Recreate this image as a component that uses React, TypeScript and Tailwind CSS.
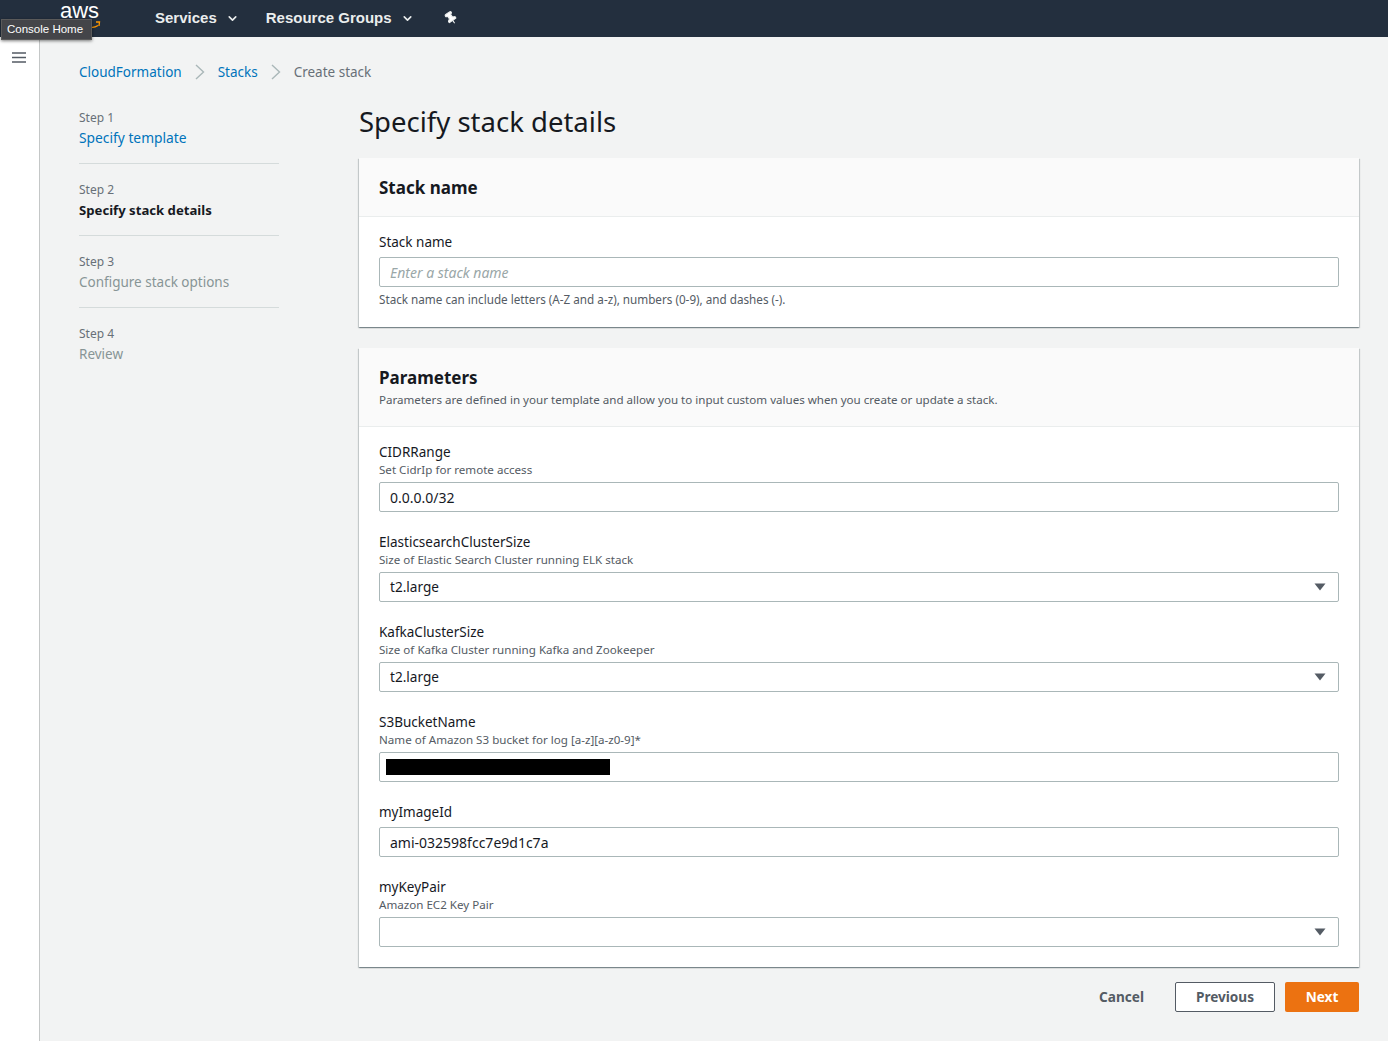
import { ChevronDown, Pin } from 'lucide-react'

const font = { fontFamily: '"Noto Sans", sans-serif' }

const steps = [
  { step: 'Step 1', title: 'Specify template', cls: 'text-[13.8px] text-[#0073bb]' },
  { step: 'Step 2', title: 'Specify stack details', cls: 'font-bold text-[13.15px] text-[#16191f]' },
  { step: 'Step 3', title: 'Configure stack options', cls: 'text-[13.5px] text-[#879596]' },
  { step: 'Step 4', title: 'Review', cls: 'text-[13.5px] text-[#879596]' },
]

function Crumb() {
  return (
    <svg width="10" height="16" viewBox="0 0 10 16" fill="none" className="mx-[13px] shrink-0">
      <path d="M1 1l7.5 7L1 15" stroke="#aab7b8" strokeWidth="1.4" />
    </svg>
  )
}

function TopBar() {
  return (
    <header className="relative flex h-[37px] items-center bg-[#232f3e] text-white">
      <div className="relative ml-[60px] h-[37px] w-[40px]">
        <span className="absolute left-0 top-0 text-[22px] leading-[22px] font-['Liberation_Sans']">aws</span>
        <svg className="absolute left-[28px] top-[19px]" width="13" height="10" viewBox="0 0 13 10" fill="none">
          <path d="M1 7.5c3 1.5 6 1 9-1M8 3h3.5L11 7" stroke="#f90" strokeWidth="1.3" />
        </svg>
      </div>
      <nav className="ml-[55px] flex items-center font-['Liberation_Sans'] text-[15px] font-bold text-[#eaeded]">
        <span className="-mt-[1px]">Services</span>
        <ChevronDown className="ml-[9px] h-[13px] w-[13px]" strokeWidth={3} />
        <span className="-mt-[1px] ml-[27px]">Resource Groups</span>
        <ChevronDown className="ml-[9px] h-[13px] w-[13px]" strokeWidth={3} />
        <Pin className="ml-[30px] -mt-[2px] h-[14px] w-[14px] rotate-[-35deg] fill-white" strokeWidth={2} />
      </nav>
      <div className="absolute left-[1px] top-[19px] flex h-[21px] w-[91px] items-center border border-[#5a5a5a] bg-[#444549] pl-[5px] font-['Liberation_Sans'] text-[11.5px] text-white shadow-[0_1px_3px_rgba(0,0,0,0.5)]">
        Console Home
      </div>
    </header>
  )
}

function Field({ label, desc, children }: { label: string; desc?: string; children: React.ReactNode }) {
  return (
    <div>
      <div className="h-5 text-[13.5px] leading-5 text-[#16191f]">{label}</div>
      {desc ? (
        <div className="mb-1 h-4 text-[11.6px] leading-4 text-[#545b64]">{desc}</div>
      ) : (
        <div className="h-[5px]" />
      )}
      {children}
    </div>
  )
}

function Input({ value, placeholder, select }: { value?: string; placeholder?: string; select?: boolean }) {
  return (
    <div className="flex h-[30px] items-center justify-between rounded-[2px] border border-[#aab7b8] bg-white pl-[10px] pr-[12px] text-[14px] text-[#16191f]">
      {placeholder ? <span className="italic text-[#9aa7a8]">{placeholder}</span> : <span className={select ? 'text-[13.6px]' : ''}>{value}</span>}
      {select && (
        <svg width="12" height="8" viewBox="0 0 12 8" className="shrink-0">
          <path d="M0.5 0.5h11L6 7.5z" fill="#545b64" />
        </svg>
      )}
    </div>
  )
}

const cardShadow = 'shadow-[0_1px_1px_0_rgba(0,28,36,0.3),1px_1px_1px_0_rgba(0,28,36,0.15),-1px_1px_1px_0_rgba(0,28,36,0.15)]'

export default function App() {
  return (
    <div className="min-h-[1041px] bg-[#f2f3f3]" style={font}>
      <TopBar />
      <div className="flex min-h-[1004px]">
        <aside className="w-[40px] shrink-0 border-r border-[#c4c7c7] bg-white pl-[12px] pt-[15px]">
          <svg width="14" height="11" viewBox="0 0 14 11" className="block">
            <path d="M0 1h14M0 5.5h14M0 10h14" stroke="#545b64" strokeWidth="1.5" />
          </svg>
        </aside>
        <main className="min-w-0 flex-1 pl-[39px] pr-[29px]">
          <div className="mt-[22px] flex h-[26px] items-center text-[13.5px]">
            <span className="text-[#0073bb]">CloudFormation</span>
            <Crumb />
            <span className="text-[#0073bb]">Stacks</span>
            <Crumb />
            <span className="text-[#687078]">Create stack</span>
          </div>
          <div className="flex">
            <ol className="w-[200px] shrink-0 pt-[23px]">
              {steps.map((s, i) => (
                <li key={s.step} className={i < 3 ? 'mb-[16px] h-[56px] border-b border-[#d5dbdb]' : ''}>
                  <div className="h-[20px] text-[12px] leading-5 text-[#687078]">{s.step}</div>
                  <div className={`h-[20px] leading-5 ${s.cls}`}>{s.title}</div>
                </li>
              ))}
            </ol>
            <div className="ml-[80px] min-w-0 flex-1">
              <h1 className="flex h-[73px] items-center pt-[1px] text-[27.5px] text-[#16191f]">Specify stack details</h1>
              <section className={`bg-white ${cardShadow}`}>
                <div className="flex h-[59px] items-center border-b border-[#eaeded] bg-[#fafafa] px-5 pt-[1px]">
                  <h2 className="text-[17px] font-bold text-[#16191f]">Stack name</h2>
                </div>
                <div className="px-5 pb-[19px] pt-[15px]">
                  <Field label="Stack name">
                    <Input placeholder="Enter a stack name" />
                  </Field>
                  <p className="mt-[4px] h-4 text-[11.7px] leading-4 text-[#545b64]">
                    Stack name can include letters (A-Z and a-z), numbers (0-9), and dashes (-).
                  </p>
                  <div className="h-[1px]" />
                </div>
              </section>
              <section className={`mt-[21px] bg-white ${cardShadow}`}>
                <div className="h-[79px] border-b border-[#eaeded] bg-[#fafafa] px-5 pt-[17px]">
                  <h2 className="h-[27px] text-[17px] font-bold leading-[26px] text-[#16191f]">Parameters</h2>
                  <p className="text-[11.58px] leading-4 text-[#545b64]">
                    Parameters are defined in your template and allow you to input custom values when you create or update a stack.
                  </p>
                </div>
                <div className="flex flex-col gap-5 px-5 pb-5 pt-[15px]">
                  <Field label="CIDRRange" desc="Set CidrIp for remote access">
                    <Input value="0.0.0.0/32" />
                  </Field>
                  <Field label="ElasticsearchClusterSize" desc="Size of Elastic Search Cluster running ELK stack">
                    <Input value="t2.large" select />
                  </Field>
                  <Field label="KafkaClusterSize" desc="Size of Kafka Cluster running Kafka and Zookeeper">
                    <Input value="t2.large" select />
                  </Field>
                  <Field label="S3BucketName" desc="Name of Amazon S3 bucket for log [a-z][a-z0-9]*">
                    <div className="flex h-[30px] items-center rounded-[2px] border border-[#aab7b8] bg-white pl-[6px]">
                      <div className="h-4 w-[224px] bg-black" />
                    </div>
                  </Field>
                  <Field label="myImageId">
                    <Input value="ami-032598fcc7e9d1c7a" />
                  </Field>
                  <Field label="myKeyPair" desc="Amazon EC2 Key Pair">
                    <Input select />
                  </Field>
                </div>
              </section>
              <div className="mt-[15px] flex items-center justify-end text-[13.6px] font-bold">
                <button className="mr-[31px] text-[#545b64]">Cancel</button>
                <button className="h-[30px] w-[100px] rounded-[2px] border border-[#545b64] bg-white text-[#545b64]">Previous</button>
                <button className="ml-[10px] h-[30px] w-[74px] rounded-[2px] bg-[#ec7211] text-white">Next</button>
              </div>
            </div>
          </div>
        </main>
      </div>
    </div>
  )
}
